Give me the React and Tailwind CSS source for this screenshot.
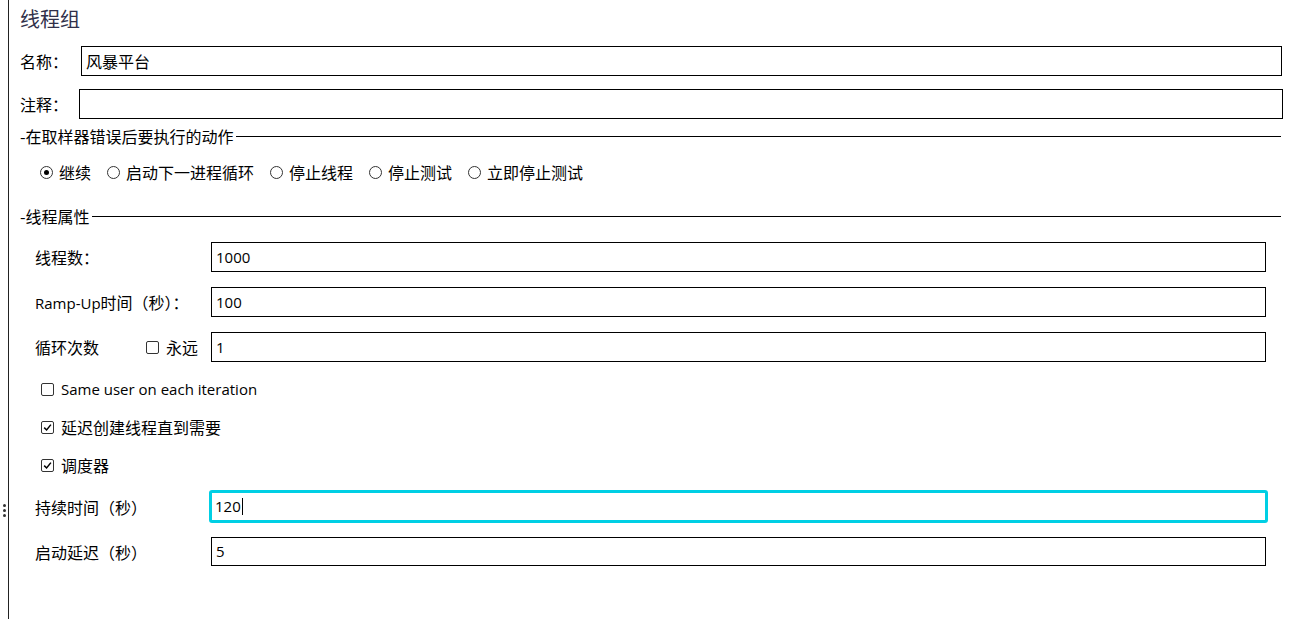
import React from "react";

const CJK = "font-['Noto_Sans_CJK_SC',sans-serif]";
const LAT = "font-['Open_Sans','Noto_Sans_CJK_SC',sans-serif]";

const Radio = ({ checked }) => (
  <span className="w-[13px] h-[13px] shrink-0 rounded-full border border-[#333] bg-white flex items-center justify-center">
    {checked && <span className="w-[5px] h-[5px] rounded-full bg-black" />}
  </span>
);

const Check = ({ checked }) => (
  <span className="w-[13px] h-[13px] shrink-0 border border-[#333] rounded-[2px] bg-white flex items-center justify-center">
    {checked && (
      <svg width="9" height="9" viewBox="0 0 9 9">
        <path d="M1.2 4.6 L3.6 7 L7.9 1.6" stroke="#000" strokeWidth="1.5" fill="none" />
      </svg>
    )}
  </span>
);

const Section = ({ title }) => (
  <div className="h-[18px] flex items-center">
    <span className={`${CJK} text-[16px] leading-[18px] text-black whitespace-nowrap`}>{title}</span>
    <span className="flex-1 h-px bg-black ml-[2px] mr-[2px]" />
  </div>
);

const Field = ({ value, cjk }) => (
  <div className="flex-1 h-full border border-black bg-white flex items-center pl-[4px]">
    <span className={`${cjk ? CJK + " text-[16px]" : LAT + " text-[15px]"} text-black leading-none`}>{value}</span>
  </div>
);

const PropRow = ({ label, value, mt, h = "h-[30px]", children }) => (
  <div className={`${mt} ${h} flex items-center pl-[15px] pr-[17px]`}>
    <div className="w-[176px] flex items-center text-black">{label}</div>
    {children || <Field value={value} />}
  </div>
);

const CheckRow = ({ checked, label, mt }) => (
  <div className={`${mt} h-[20px] flex items-center pl-[21px] gap-[7px]`}>
    <Check checked={checked} />
    {label}
  </div>
);

export default function App() {
  const radios = [
    ["继续", true],
    ["启动下一进程循环", false],
    ["停止线程", false],
    ["停止测试", false],
    ["立即停止测试", false],
  ];
  return (
    <div className="w-[1293px] h-[619px] bg-white flex overflow-hidden">
      <div className="w-[8px] flex flex-col items-center pt-[504px] gap-[2px]">
        <span className="w-[3px] h-[3px] rounded-full bg-[#333]" />
        <span className="w-[3px] h-[3px] rounded-full bg-[#333]" />
        <span className="w-[3px] h-[3px] rounded-full bg-[#333]" />
      </div>
      <div className="w-px bg-[#222]" />
      <div className="flex-1 flex flex-col pl-[11px] pr-[10px]">
        <div className={`${CJK} h-[38px] leading-[38px] text-[20px] text-[#30304a]`}>线程组</div>

        <div className="mt-[8px] h-[30px] flex items-center pr-[1px]">
          <div className={`${CJK} w-[61px] text-[16px] text-black`}>名称：</div>
          <Field value="风暴平台" cjk />
        </div>
        <div className="mt-[13px] h-[30px] flex items-center">
          <div className={`${CJK} w-[59px] text-[16px] text-black`}>注释：</div>
          <Field value="" />
        </div>

        <div className="mt-[8px]">
          <Section title="-在取样器错误后要执行的动作" />
        </div>

        <div className="mt-[17px] h-[20px] flex items-center pl-[20px] gap-[16px]">
          {radios.map(([t, c]) => (
            <div key={t} className="flex items-center gap-[6px]">
              <Radio checked={c} />
              <span className={`${CJK} text-[16px] text-black leading-none`}>{t}</span>
            </div>
          ))}
        </div>

        <div className="mt-[25px]">
          <Section title="-线程属性" />
        </div>

        <PropRow mt="mt-[17px]" value="1000" label={<span className={`${CJK} text-[16px]`}>线程数：</span>} />
        <PropRow
          mt="mt-[15px]"
          value="100"
          label={
            <span className="whitespace-nowrap">
              <span className={`${LAT} text-[15px]`}>Ramp-Up</span>
              <span className={`${CJK} text-[16px]`}>时间（秒）：</span>
            </span>
          }
        />
        <PropRow
          mt="mt-[15px]"
          value="1"
          label={
            <div className="flex items-center w-full">
              <span className={`${CJK} text-[16px] w-[111px]`}>循环次数</span>
              <Check checked={false} />
              <span className={`${CJK} text-[16px] ml-[7px]`}>永远</span>
            </div>
          }
        />

        <CheckRow mt="mt-[17px]" checked={false} label={<span className={`${LAT} text-[15px] text-black`}>Same user on each iteration</span>} />
        <CheckRow mt="mt-[18px]" checked label={<span className={`${CJK} text-[16px] text-black`}>延迟创建线程直到需要</span>} />
        <CheckRow mt="mt-[18px]" checked label={<span className={`${CJK} text-[16px] text-black`}>调度器</span>} />

        <div className="mt-[15px] h-[33px] flex items-center pl-[15px] pr-[15px]">
          <div className={`${CJK} w-[174px] text-[16px] text-black`}>持续时间（秒）</div>
          <div className="flex-1 h-full border-[3px] border-[#00cfe4] rounded-[3px] bg-white flex items-center pl-[3px]">
            <span className={`${LAT} text-[15px] text-black leading-none`}>120</span>
            <span className="w-px h-[17px] bg-black ml-[1px]" />
          </div>
        </div>

        <PropRow mt="mt-[14px]" h="h-[29px]" value="5" label={<span className={`${CJK} text-[16px]`}>启动延迟（秒）</span>} />
      </div>
    </div>
  );
}
